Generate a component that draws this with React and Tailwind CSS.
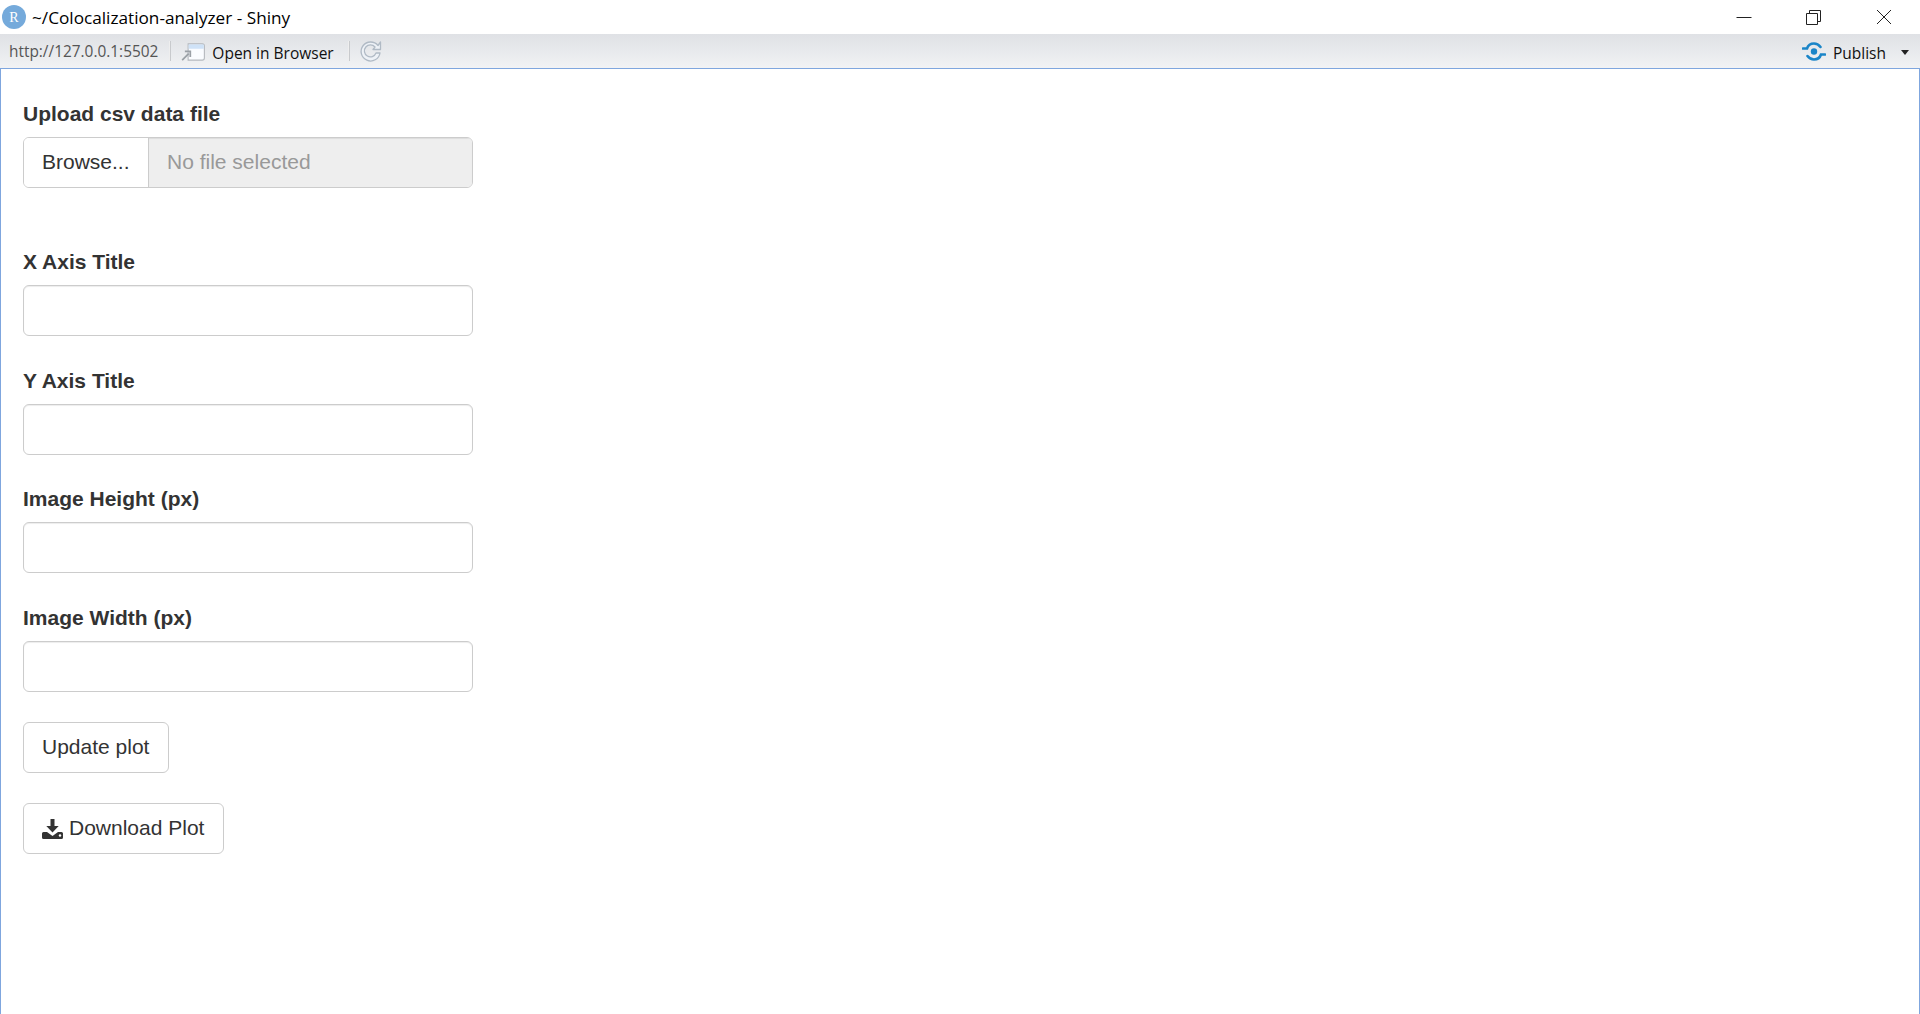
const ui = { fontFamily: '"Open Sans", "Noto Sans", sans-serif' };

function Field({ label, mt }) {
  return (
    <div className={mt}>
      <div className="h-[28px] text-[21px] font-bold leading-[30px] text-[#333333]">{label}</div>
      <input
        type="text"
        className="mt-[10px] block h-[51px] w-[450px] rounded-[6px] border border-[#cccccc] bg-white shadow-[inset_0_1px_1px_rgba(0,0,0,0.075)]"
      />
    </div>
  );
}

function Btn({ children, w, mt }) {
  return (
    <button
      type="button"
      className={`${w} ${mt} flex h-[51px] items-center rounded-[6px] border border-[#cccccc] bg-white pb-[2px] pl-[18px] text-[21px] text-[#333333]`}
    >
      {children}
    </button>
  );
}

export default function App() {
  return (
    <div className="flex h-[1014px] w-[1920px] flex-col overflow-hidden bg-white" style={{ fontFamily: '"Liberation Sans", Arial, sans-serif' }}>
      <div className="flex h-[34px] shrink-0 items-center bg-white text-[#000000]" style={ui}>
        <svg width="24" height="24" viewBox="0 0 24 24" className="ml-[2px]">
          <circle cx="12" cy="12" r="12" fill="#75aadb" />
          <text x="12" y="17" textAnchor="middle" fontSize="14" fontFamily="Liberation Serif, serif" fill="#ffffff">R</text>
        </svg>
        <span className="ml-[6px] mt-[1px] text-[17.2px] leading-[20px]">~/Colocalization-analyzer - Shiny</span>
        <div className="ml-auto flex items-center">
          <svg width="16" height="16" viewBox="0 0 16 16" className="mr-[53px]">
            <path d="M0.5 8.500h15" stroke="#222" strokeWidth="1" fill="none" />
          </svg>
          <svg width="16" height="16" viewBox="0 0 16 16" className="mr-[55px]">
            <path d="M1.500 4.500h11v11h-11z M4.500 4.500v-3h11v11h-3" stroke="#222" strokeWidth="1" fill="none" />
          </svg>
          <svg width="16" height="16" viewBox="0 0 16 16" className="mr-[28px]">
            <path d="M1 1l14 14M15 1L1 15" stroke="#222" strokeWidth="1" fill="none" />
          </svg>
        </div>
      </div>

      <div className="flex h-[34px] shrink-0 items-center bg-gradient-to-b from-[#dfe1e5] to-[#f1f2f4] text-[#222222]" style={ui}>
        <span className="ml-[9px] mt-[1px] text-[15.4px] leading-[20px] text-[#555555]">http://127.0.0.1:5502</span>
        <div className="ml-[11px] h-[20px] w-[2px] border-r border-[#c8cacd] bg-[#eeeeee]" />
        <svg width="26" height="22" viewBox="0 0 24 20" className="ml-[9px] mt-[2px]">
          <path d="M7.500 2.500h13a2 2 0 0 1 2 2v11a2 2 0 0 1-2 2h-13z" fill="#fafcff" stroke="#b4b8bd" />
          <path d="M8 3h14v4H8z" fill="#cfe2f7" />
          <path d="M2 17.500l6-6M4.500 9.500h5v5" stroke="#9aa0a6" strokeWidth="1.600" fill="none" />
        </svg>
        <span className="ml-[6px] mt-[4px] text-[15.5px] leading-[20px] text-[#111111]">Open in Browser</span>
        <div className="ml-[14px] h-[20px] w-[2px] border-r border-[#c8cacd] bg-[#eeeeee]" />
        <svg width="24" height="24" viewBox="0 0 24 24" className="ml-[9px]">
          <path d="M19 6.500A9.500 9.500 0 1 0 21 14h-4a6 6 0 1 1-1-6l-2 2.500h7.500V3z" fill="#eef2f7" stroke="#b0bac5" strokeWidth="1.300" strokeLinejoin="round" />
        </svg>
        <div className="ml-auto flex items-center">
          <svg width="24" height="20" viewBox="0 0 24 20" className="mt-[2px]">
            <circle cx="12" cy="9.500" r="3.200" fill="#1a85c8" />
            <path d="M1 6.500h4c1-3 3-5 7-5c3 0 5 1.500 6.500 3.500" stroke="#1a85c8" strokeWidth="2.600" fill="none" strokeLinecap="round" />
            <path d="M23 12.500h-4c-1 3-3 5-7 5c-3 0-5-1.500-6.500-3.500" stroke="#1a85c8" strokeWidth="2.600" fill="none" strokeLinecap="round" />
          </svg>
          <span className="ml-[7px] mt-[3px] text-[15.5px] leading-[20px] text-[#111111]">Publish</span>
          <svg width="8" height="5" viewBox="0 0 8 5" className="ml-[15px] mr-[11px] mt-[2px]">
            <path d="M0 0h8L4 5z" fill="#222" />
          </svg>
        </div>
      </div>

      <main className="flex-1 border-x border-t border-[#7fa6de] pl-[22px] pt-[30px]">
        <div className="h-[28px] text-[21px] font-bold leading-[30px] text-[#333333]">Upload csv data file</div>
        <div className="mt-[10px] flex h-[51px] w-[450px] overflow-hidden rounded-[6px] border border-[#cccccc] text-[21px]">
          <div className="flex w-[125px] shrink-0 items-center border-r border-[#cccccc] bg-white pb-[2px] pl-[18px] text-[#333333]">Browse...</div>
          <div className="flex flex-1 items-center bg-[#eeeeee] pb-[2px] pl-[18px] text-[#999999] shadow-[inset_0_1px_1px_rgba(0,0,0,0.075)]">No file selected</div>
        </div>

        <Field label="X Axis Title" mt="mt-[59px]" />
        <Field label="Y Axis Title" mt="mt-[30px]" />
        <Field label="Image Height (px)" mt="mt-[29px]" />
        <Field label="Image Width (px)" mt="mt-[30px]" />

        <Btn w="w-[146px]" mt="mt-[30px]">Update plot</Btn>
        <Btn w="w-[201px]" mt="mt-[30px]">
          <svg width="21" height="20" viewBox="0 0 21 20" className="mr-[6px] mt-[2px]">
            <path d="M8.500 0h4v7h4.200l-6.200 6.500L4.300 7h4.200z" fill="#333333" />
            <path d="M0 14.500a1.500 1.500 0 0 1 1.500-1.500H5l5.500 4 5.500-4h3.500a1.500 1.500 0 0 1 1.500 1.500v4a1.500 1.500 0 0 1-1.500 1.500h-18A1.500 1.500 0 0 1 0 18.500z" fill="#333333" />
            <circle cx="18" cy="16.500" r="1.200" fill="#ffffff" />
          </svg>
          Download Plot
        </Btn>
      </main>
    </div>
  );
}
